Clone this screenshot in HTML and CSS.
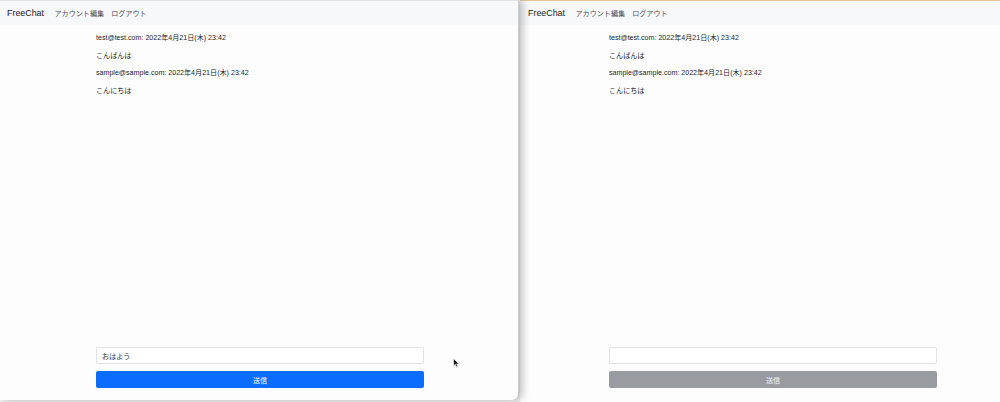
FILE: index.html
```html
<!DOCTYPE html>
<html lang="ja">
<head>
<meta charset="utf-8">
<title>FreeChat</title>
<link rel="stylesheet" href="styles.css">
</head>
<body>
<div class="desk">
  <div class="window win-left">
    <nav class="navbar">
      <span class="brand">FreeChat</span>
      <a class="nav-link">アカウント編集</a>
      <a class="nav-link">ログアウト</a>
    </nav>
    <main class="chat">
      <div class="container">
        <p>test@test.com: 2022年4月21日(木) 23:42</p>
        <p>こんばんは</p>
        <p>sample@sample.com: 2022年4月21日(木) 23:42</p>
        <p>こんにちは</p>
      </div>
    </main>
    <form class="container composer">
      <div class="input">おはよう</div>
      <div class="btn btn-primary">送信</div>
    </form>
    <svg class="cursor" width="7" height="10" viewBox="0 0 7 10"><path d="M0.5 0.5 L0.5 8 L2.3 6.3 L3.6 9.2 L4.8 8.7 L3.6 5.9 L6 5.9 Z" fill="#111" stroke="#fff" stroke-width="0.6"/></svg>
  </div>
  <div class="window win-right">
    <nav class="navbar">
      <span class="brand">FreeChat</span>
      <a class="nav-link">アカウント編集</a>
      <a class="nav-link">ログアウト</a>
    </nav>
    <main class="chat">
      <div class="container">
        <p>test@test.com: 2022年4月21日(木) 23:42</p>
        <p>こんばんは</p>
        <p>sample@sample.com: 2022年4月21日(木) 23:42</p>
        <p>こんにちは</p>
      </div>
    </main>
    <form class="container composer">
      <div class="input"></div>
      <div class="btn btn-disabled">送信</div>
    </form>
  </div>
</div>
</body>
</html>
```
FILE: styles.css
```css
html, body {
  margin: 0;
  padding: 0;
  background: #f4f4f4;
}
body {
  font-family: "Liberation Sans", "Noto Sans CJK JP", sans-serif;
  font-size: 7.1px;
  color: #212529;
}
.desk {
  display: flex;
  width: 1000px;
  height: 402px;
  overflow: hidden;
}
.window {
  position: relative;
  display: flex;
  flex-direction: column;
  background: #fdfdfd;
  box-sizing: border-box;
}
.win-left {
  width: 519px;
  height: 400px;
  flex: none;
  border-top: 1px solid #e2e2e2;
  border-right: 1px solid #c9c9c9;
  border-radius: 0 0 7px 0;
  box-shadow: 3px 0 8px rgba(0,0,0,0.28);
  z-index: 2;
}
.win-right {
  flex: 1;
  height: 402px;
  border-top: 1px solid #e3c59a;
  margin-left: 1px;
}
.navbar {
  display: flex;
  align-items: center;
  height: 24px;
  padding: 0 7px;
  background: #f7f8fa;
  flex: none;
}
.win-right .navbar { padding-left: 8px; }
.brand {
  font-size: 8.9px;
  color: #1b1b1b;
  margin-right: 7px;
}
.nav-link {
  font-size: 7.1px;
  color: #4f5052;
  padding: 0 3.5px;
}
.chat {
  flex: 1;
  padding-top: 8px;
}
.container {
  width: 328px;
  margin-left: 96px;
}
.win-right .container { margin-left: 89px; }
.chat p {
  margin: 0 0 7.1px 0;
  line-height: 10.6px;
}
.composer {
  display: flex;
  flex-direction: column;
  gap: 7px;
  padding-bottom: 12px;
}
.win-right .composer { padding-bottom: 14px; }
.input {
  height: 17px;
  box-sizing: border-box;
  border: 1px solid #e1e3e6;
  border-radius: 2px;
  background: #fff;
  padding: 0 5px;
  display: flex;
  align-items: center;
  font-size: 7.1px;
  color: #333;
}
.btn {
  height: 17px;
  border-radius: 2px;
  display: flex;
  align-items: center;
  justify-content: center;
  color: #fff;
  font-size: 7.1px;
}
.btn-primary { background: #0b6dfd; }
.btn-disabled { background: #989ca1; color: #f2f2f2; }
.cursor {
  position: absolute;
  left: 453px;
  top: 357px;
}
```
